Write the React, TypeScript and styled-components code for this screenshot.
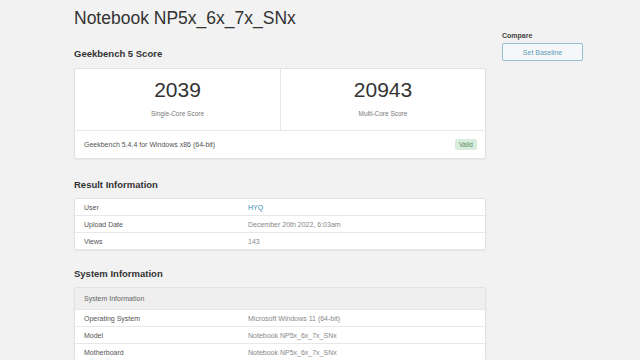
import React from 'react'
import styled, { createGlobalStyle } from 'styled-components'

const GlobalStyle = createGlobalStyle`
  html, body {
    margin: 0;
    padding: 0;
    background: #f2f2f2;
    font-family: "Liberation Sans", Arial, sans-serif;
    color: #333;
  }
`

const Page = styled.div`
  display: flex;
  gap: 16px;
  padding: 7px 0 0 74px;
  height: 353px;
  overflow: hidden;
`

const Main = styled.div`
  width: 412px;
  display: flex;
  flex-direction: column;
`

const Sidebar = styled.div`
  width: 80px;
  padding-top: 24px;
  display: flex;
  flex-direction: column;
`

const Title = styled.h1`
  margin: 0;
  font-size: 17.5px;
  line-height: 22px;
  font-weight: normal;
  color: #333;
`

const SectionHeading = styled.h2<{ $top: number; $bottom: number }>`
  margin: ${({ $top }) => $top}px 0 ${({ $bottom }) => $bottom}px;
  font-size: 9.5px;
  line-height: 13px;
  font-weight: bold;
  color: #333;
`

const Card = styled.div`
  background: #fff;
  border: 1px solid #e2e2e2;
  border-radius: 2px;
  box-shadow: 0 1px 2px rgba(0, 0, 0, 0.05);
`

const Scores = styled.div`
  display: grid;
  grid-template-columns: 1fr 1fr;
`

const ScoreCell = styled.div`
  padding: 9px 0 12px;
  text-align: center;
  & + & {
    border-left: 1px solid #e6e6e6;
  }
`

const ScoreValue = styled.div`
  font-size: 21px;
  line-height: 24px;
  color: #333;
`

const ScoreLabel = styled.div`
  margin-top: 7px;
  font-size: 6.5px;
  line-height: 9px;
  color: #777;
`

const CardFooter = styled.div`
  height: 27px;
  border-top: 1px solid #e8e8e8;
  display: flex;
  align-items: center;
  justify-content: space-between;
  padding: 0 8px 0 9px;
  font-size: 7px;
  color: #555;
`

const Badge = styled.span`
  background: #d8eddc;
  color: #5d8c68;
  font-size: 6.5px;
  line-height: 11px;
  padding: 0 4px;
  border-radius: 2px;
`

const Table = styled.div`
  background: #fff;
  border: 1px solid #e2e2e2;
  border-radius: 2px;
  box-shadow: 0 1px 2px rgba(0, 0, 0, 0.05);
`

const Row = styled.div`
  display: grid;
  grid-template-columns: 164px 1fr;
  height: 16px;
  align-items: center;
  font-size: 7px;
  & + & {
    border-top: 1px solid #e8e8e8;
  }
`

const HeaderRow = styled.div`
  height: 21px;
  display: flex;
  align-items: center;
  padding: 0 9px;
  background: #efefef;
  border-bottom: 1px solid #e6e6e6;
  font-size: 7px;
  color: #666;
`

const Cell = styled.div<{ $value?: boolean; $link?: boolean }>`
  padding: 0 9px;
  color: ${({ $value, $link }) => ($link ? '#3c8db5' : $value ? '#888' : '#555')};
  white-space: nowrap;
`

const CompareLabel = styled.div`
  font-size: 7px;
  line-height: 9px;
  font-weight: bold;
  color: #444;
  margin-bottom: 3px;
`

const BaselineButton = styled.button`
  height: 18px;
  width: 81px;
  border: 1px solid #93c0d0;
  border-radius: 2px;
  background: #f5f7f8;
  color: #5e9cbb;
  font-family: inherit;
  font-size: 7px;
  padding: 0;
`

const resultRows = [
  { label: 'User', value: 'HYQ', link: true },
  { label: 'Upload Date', value: 'December 20th 2022, 6:03am' },
  { label: 'Views', value: '143' },
]

const systemRows = [
  { label: 'Operating System', value: 'Microsoft Windows 11 (64-bit)' },
  { label: 'Model', value: 'Notebook NP5x_6x_7x_SNx' },
  { label: 'Motherboard', value: 'Notebook NP5x_6x_7x_SNx' },
]

const App = () => {
  return (
    <>
      <GlobalStyle />
      <Page>
        <Main>
          <Title>Notebook NP5x_6x_7x_SNx</Title>

          <SectionHeading $top={18} $bottom={8}>Geekbench 5 Score</SectionHeading>
          <Card>
            <Scores>
              <ScoreCell>
                <ScoreValue>2039</ScoreValue>
                <ScoreLabel>Single-Core Score</ScoreLabel>
              </ScoreCell>
              <ScoreCell>
                <ScoreValue>20943</ScoreValue>
                <ScoreLabel>Multi-Core Score</ScoreLabel>
              </ScoreCell>
            </Scores>
            <CardFooter>
              <span>Geekbench 5.4.4 for Windows x86 (64-bit)</span>
              <Badge>Valid</Badge>
            </CardFooter>
          </Card>

          <SectionHeading $top={19} $bottom={7}>Result Information</SectionHeading>
          <Table>
            {resultRows.map((r) => (
              <Row key={r.label}>
                <Cell>{r.label}</Cell>
                <Cell $value $link={r.link}>{r.value}</Cell>
              </Row>
            ))}
          </Table>

          <SectionHeading $top={17} $bottom={7}>System Information</SectionHeading>
          <Table>
            <HeaderRow>System Information</HeaderRow>
            {systemRows.map((r) => (
              <Row key={r.label}>
                <Cell>{r.label}</Cell>
                <Cell $value>{r.value}</Cell>
              </Row>
            ))}
          </Table>
        </Main>

        <Sidebar>
          <CompareLabel>Compare</CompareLabel>
          <BaselineButton>Set Baseline</BaselineButton>
        </Sidebar>
      </Page>
    </>
  )
}

export default App
